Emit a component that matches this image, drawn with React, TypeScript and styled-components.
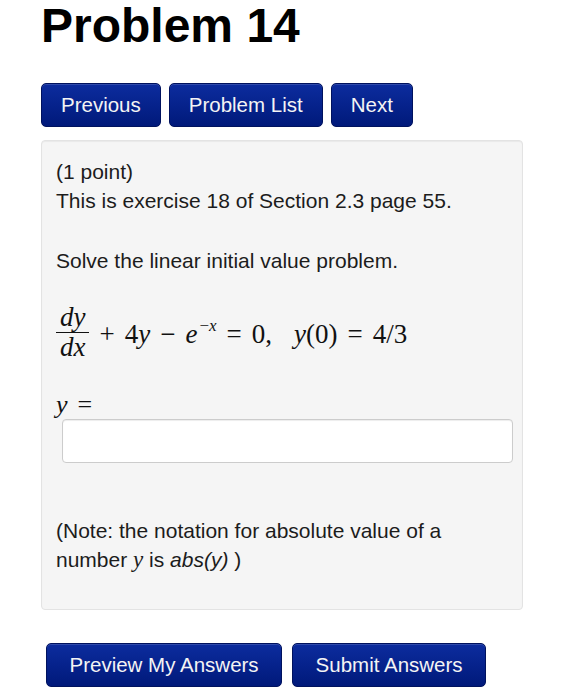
import styled, { createGlobalStyle } from "styled-components";

const GlobalStyle = createGlobalStyle`
    body {
        margin: 0;
        background: #ffffff;
        font-family: "Liberation Sans", Arial, sans-serif;
        color: #1c1c1c;
    }
`

const Page = styled.div`
    padding-left: 41px;
    width: 482px;
`

const Title = styled.h1`
    margin: 0;
    font-size: 48px;
    line-height: 52px;
    font-weight: 700;
    color: #000;
`

const ButtonRow = styled.div<{ $top: number; $indent?: number; $gap: number }>`
    display: flex;
    gap: ${p => p.$gap}px;
    margin-top: ${p => p.$top}px;
    margin-left: ${p => p.$indent ?? 0}px;
`

const NavButton = styled.button<{ $wide?: boolean }>`
    font-family: "Liberation Sans", Arial, sans-serif;
    font-size: 20.5px;
    line-height: 24px;
    height: 44px;
    padding: 0 ${p => (p.$wide ? 22.5 : 19)}px;
    color: #f4f4f4;
    border: 1px solid #00125e;
    border-radius: 5px;
    background: linear-gradient(to bottom, #0c2c9e, #00197a);
    box-shadow: inset 0 1px 0 rgba(255, 255, 255, 0.15);
    cursor: pointer;
`

const Panel = styled.div`
    margin-top: 13px;
    box-sizing: border-box;
    height: 470px;
    padding: 16px 14px 0 14px;
    background: #f5f5f5;
    border: 1px solid #e3e3e3;
    border-radius: 4px;
    box-shadow: inset 0 1px 1px rgba(0, 0, 0, 0.05);
    font-size: 21px;
    line-height: 29px;
`

const Line = styled.div<{ $top?: number }>`
    margin-top: ${p => p.$top ?? 0}px;
`

const MathRow = styled.div`
    margin-top: 25px;
    height: 64px;
    display: flex;
    align-items: center;
    font-family: "Liberation Serif", "Times New Roman", serif;
    font-size: 27px;
    line-height: 1;
    color: #111;
`

const Fraction = styled.span`
    display: inline-flex;
    flex-direction: column;
    align-items: stretch;
    text-align: center;
`

const FracPart = styled.span<{ $bar?: boolean }>`
    padding: 1px 4px;
    border-top: ${p => (p.$bar ? "1.5px solid #111" : "none")};
    font-style: italic;
`

const Var = styled.i`
    font-family: "Liberation Serif", "Times New Roman", serif;
    font-style: italic;
`

const Op = styled.span`
    margin: 0 10px;
`

const Sup = styled.sup`
    font-size: 17px;
    vertical-align: 12px;
    margin-left: 2px;
`

const Gap = styled.span`
    display: inline-block;
    width: 22px;
`

const AnswerLabel = styled.div`
    margin-top: 26px;
    font-family: "Liberation Serif", "Times New Roman", serif;
    font-size: 26px;
    line-height: 29px;
    color: #111;
`

const AnswerInput = styled.input`
    display: block;
    box-sizing: border-box;
    margin-left: 6px;
    width: 451px;
    height: 44px;
    background: #fff;
    border: 1px solid #cccccc;
    border-radius: 4px;
    box-shadow: inset 0 1px 1px rgba(0, 0, 0, 0.075);
    font-size: 20px;
    padding: 0 8px;
`

const NoteVar = styled.i`
    font-family: "Liberation Serif", "Times New Roman", serif;
    font-size: 23px;
`

export default function App() {
    return (
        <>
            <GlobalStyle />
            <Page>
                <Title>Problem 14</Title>
                <ButtonRow $top={31} $gap={8}>
                    <NavButton>Previous</NavButton>
                    <NavButton>Problem List</NavButton>
                    <NavButton>Next</NavButton>
                </ButtonRow>
                <Panel>
                    <Line>(1 point)</Line>
                    <Line>This is exercise 18 of Section 2.3 page 55.</Line>
                    <Line $top={31}>Solve the linear initial value problem.</Line>
                    <MathRow>
                        <Fraction>
                            <FracPart>dy</FracPart>
                            <FracPart $bar>dx</FracPart>
                        </Fraction>
                        <span>
                            <Op>+</Op>4<Var>y</Var>
                            <Op>−</Op>
                            <Var>e</Var>
                            <Sup>−<Var>x</Var></Sup>
                            <Op>=</Op>0,
                            <Gap />
                            <Var>y</Var>(0)
                            <Op>=</Op>4/3
                        </span>
                    </MathRow>
                    <AnswerLabel>
                        <Var>y</Var><Op>=</Op>
                    </AnswerLabel>
                    <AnswerInput type="text" />
                    <Line $top={53}>(Note: the notation for absolute value of a</Line>
                    <Line>
                        number <NoteVar>y</NoteVar> is <i>abs(y)</i> )
                    </Line>
                </Panel>
                <ButtonRow $top={33} $indent={5} $gap={10}>
                    <NavButton $wide>Preview My Answers</NavButton>
                    <NavButton $wide>Submit Answers</NavButton>
                </ButtonRow>
            </Page>
        </>
    );
}
